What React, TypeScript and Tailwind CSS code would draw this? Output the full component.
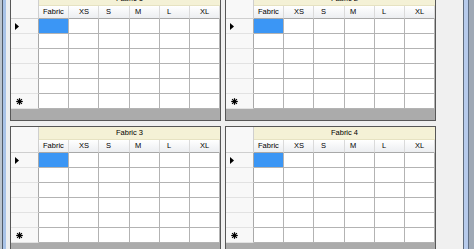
import React from "react";

const COLS: { label: string; pad: string }[] = [
  { label: "Fabric", pad: "pl-[4px]" },
  { label: "XS", pad: "pl-[10px]" },
  { label: "S", pad: "pl-[7px]" },
  { label: "M", pad: "pl-[5px]" },
  { label: "L", pad: "pl-[7px]" },
  { label: "XL", pad: "pl-[10px]" },
];

const GRID = "grid grid-cols-[28px_30px_30px_31px_30px_30px_30px]";

function CurrentRowArrow() {
  return (
    <svg width="4" height="7" viewBox="0 0 4 7" className="block">
      <path d="M0 0 L4 3.5 L0 7 Z" fill="#000" />
    </svg>
  );
}

function NewRowStar() {
  return (
    <svg width="7" height="7" viewBox="0 0 7 7" className="block">
      <g stroke="#000" strokeWidth="1.2">
        <line x1="3.5" y1="0.2" x2="3.5" y2="6.8" />
        <line x1="0.2" y1="3.5" x2="6.8" y2="3.5" />
        <line x1="1.1" y1="1.1" x2="5.9" y2="5.9" />
        <line x1="5.9" y1="1.1" x2="1.1" y2="5.9" />
      </g>
    </svg>
  );
}

function FabricGrid({ title }: { title: string }) {
  const rows = [0, 1, 2, 3, 4, 5];
  return (
    <div className="flex h-[129px] w-[211px] flex-col overflow-hidden border border-[#575757] bg-[#ababab]">
      <div className={`${GRID} shrink-0`}>
        <div className="row-span-2 border-r border-b border-[#cfcfcf] bg-[#f8f8f8]" />
        <div className="col-span-6 flex h-[13px] items-center justify-center border-b border-[#e6e2c2] bg-[#f4f1d6] text-[7.5px] text-black">
          {title}
        </div>
        {COLS.map((col) => (
          <div
            key={col.label}
            className={`flex h-[13px] items-center border-r border-b border-r-[#dadada] border-b-[#a8a8a8] bg-gradient-to-b from-white to-[#eceef1] text-[7.5px] text-black ${col.pad}`}
          >
            {col.label}
          </div>
        ))}
      </div>

      {rows.map((r) => (
        <div key={r} className={`${GRID} shrink-0`}>
          <div className="flex h-[15px] items-center border-r border-b border-r-[#a9a9a9] border-b-[#e2e2e2] bg-[#f8f8f8] pl-[4px]">
            {r === 0 && <CurrentRowArrow />}
            {r === 5 && (
              <span className="pl-[1px]">
                <NewRowStar />
              </span>
            )}
          </div>
          {COLS.map((col, c) => (
            <div
              key={col.label}
              className={`h-[15px] border-r border-b border-[#b3b3b3] ${
                r === 0 && c === 0 ? "bg-[#3b96f5]" : "bg-white"
              }`}
            />
          ))}
        </div>
      ))}

      <div className="flex-1" />
    </div>
  );
}

export default function App() {
  return (
    <div className="flex h-[249px] w-[474px] overflow-hidden bg-[#f0f0f0] font-['Liberation_Sans',Arial,sans-serif]">
      <div className="flex shrink-0">
        <div className="w-[2px] bg-[#bcc5cf]" />
        <div className="w-[1px] bg-[#525c69]" />
        <div className="w-[3px] bg-[#a9c3e8]" />
        <div className="w-[4px] bg-[#eceef0]" />
      </div>

      <div className="min-w-0 flex-1">
        <div className="-mt-[8px] grid grid-cols-[211px_211px] gap-x-[4px] gap-y-[5px]">
          <FabricGrid title="Fabric 1" />
          <FabricGrid title="Fabric 2" />
          <FabricGrid title="Fabric 3" />
          <FabricGrid title="Fabric 4" />
        </div>
      </div>

      <div className="flex shrink-0">
        <div className="w-[1px] bg-[#5e6b7c]" />
        <div className="w-[4px] bg-[#b7cbec]" />
        <div className="w-[1px] bg-[#5f6f86]" />
        <div className="w-[5px] bg-[#9fa9b6]" />
      </div>
    </div>
  );
}
